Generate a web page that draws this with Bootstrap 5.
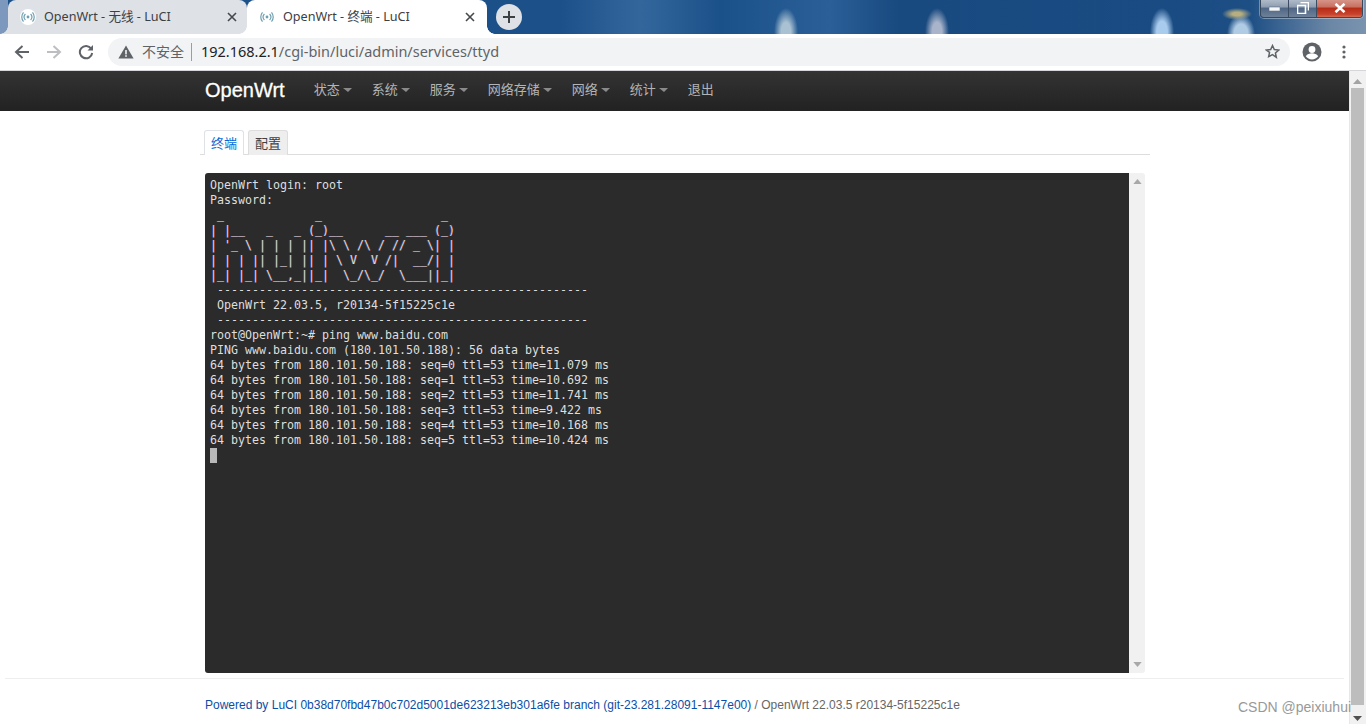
<!DOCTYPE html>
<html lang="zh-CN">
<head>
<meta charset="utf-8">
<title>OpenWrt - 终端 - LuCI</title>
<link href="https://cdn.jsdelivr.net/npm/bootstrap@5.3.0/dist/css/bootstrap.min.css" rel="stylesheet">
<style>
html,body{height:724px;overflow:hidden;margin:0}
body{font-family:"Liberation Sans","Noto Sans CJK SC",sans-serif;background:#fff;color:#404040;position:relative}
.shell{height:724px}
.ui-font{font-family:"Noto Sans","Noto Sans CJK SC",sans-serif}
.tabstrip{height:34px;flex:none;position:relative;padding-left:8px;
 background:
 radial-gradient(ellipse 12px 24px at 786px 32px,#a9c1d2 40%,rgba(169,193,210,0) 100%),
 radial-gradient(ellipse 12px 24px at 937px 32px,#a9b4ca 40%,rgba(169,180,202,0) 100%),
 radial-gradient(ellipse 12px 24px at 1162px 32px,#a8cbee 45%,rgba(168,203,238,0) 100%),
 radial-gradient(ellipse 15px 6px at 1237px 14px,#b7ae80 30%,rgba(183,174,128,0) 100%),
 radial-gradient(ellipse 14px 20px at 1241px 34px,#b0cbe4 50%,rgba(176,203,228,0) 100%),
 linear-gradient(90deg,#7c98bd 0,#7c98bd 8px,#1c5089 8px,#1c5089 560px,#33679c 640px,#1b5189 720px,#2a5f97 830px,#18497f 900px,#1a4c83 1180px,#1d4f85 1250px,#6b87a6 1330px,#7a94af 1366px)}
.ctab{height:34px;width:239px;display:flex;align-items:center;padding:0 8px 0 12px;border-radius:8px 8px 0 0;font-size:12.6px;color:#3c4043;position:relative}
.ctab-off{background:#dee1e6;padding-right:6px}
.ctab-on{background:#fff;width:240px}
.ctab-on::before,.ctab-on::after,.ctab-off::before{content:"";position:absolute;bottom:0;width:8px;height:8px}
.ctab-on::before{left:-8px;background:radial-gradient(circle at 0 0,rgba(255,255,255,0) 7.5px,#fff 8px)}
.ctab-on::after{right:-8px;background:radial-gradient(circle at 100% 0,rgba(255,255,255,0) 7.5px,#fff 8px)}
.ctab-off::before{left:-8px;background:radial-gradient(circle at 0 0,rgba(222,225,230,0) 7.5px,#dee1e6 8px)}
.ctab-title{margin-left:8px;flex:1;white-space:nowrap}
.newtab{width:26px;height:26px;border-radius:50%;background:#dee1e6;margin:4px 0 0 9px;flex:none}
.winbtns{position:absolute;right:3px;top:-1px;height:19px;width:103px;display:flex;border:1px solid #39475a;border-top:0;border-radius:0 0 4px 4px;overflow:hidden;box-shadow:0 0 0 1px rgba(255,255,255,.35)}
.winb{display:flex;align-items:center;justify-content:center;border-right:1px solid #3d4c60;background:linear-gradient(#b4bfcc 0,#8d9db1 45%,#4f6684 50%,#6e8199 100%)}
.winb-min,.winb-max{width:28px}
.winb-close{flex:1;border-right:0;background:linear-gradient(#d9998d 0,#c7705f 45%,#b52b17 50%,#c9432c 85%,#d56a4f 100%)}
.toolbar{height:37px;flex:none;background:#fff;border-bottom:1px solid #d4d6d9;padding:0 0 1px 6px}
.tbtn{width:32px;display:flex;justify-content:center;align-items:center}
.omni{width:1182px;height:28px;margin-left:6px;background:#f1f3f4;border-radius:14px;padding-left:10px;font-size:14px;color:#5f6368;white-space:nowrap}
.omni-sec{margin-left:8px;font-size:14px}
.omni-sep{width:1px;height:18px;background:#9a9da1;margin:0 9px 0 7px}
.omni-url{font-size:14.47px;color:#5f6368}
.omni-url b{font-weight:400;color:#202124}
.omni-star{margin-left:auto;margin-right:10px}
.tool-avatar{margin-left:12px}
.tool-menu{margin-left:20px}
.viewport{flex:1;min-height:0}
.pagearea{flex:1;min-width:0;position:relative}
.vscroll{width:17px;flex:none;background:#f1f1f1;border-left:1px solid #e7e7e7;padding:0 2px 0 1px}
.vthumb{flex:1;background:#bdbdbd;margin:9px 0 11px}
.varrow{height:8px;display:flex;justify-content:center}
.topnav{height:40px;flex:none;padding:0 0 0 205px;background:linear-gradient(#333,#222);font-size:13px;flex-wrap:nowrap;justify-content:flex-start}
.topnav .navbar-brand{font-size:20px;color:#fff;padding:0;margin:0 19px 3px 0;line-height:38px;-webkit-text-stroke:.3px #fff}
.topnav .navlist{flex-direction:row;margin-bottom:2px}
.topnav .nav-link{color:#b4b4b4;padding:0 10px;line-height:38px;display:block}
.topnav .dropdown-toggle::after{margin-left:3px;vertical-align:2px;border-top:4px solid #8a8a8a;border-left:5px solid transparent;border-right:4px solid transparent;border-bottom:0}
.body-wrap{width:950px;margin-left:200px}
.subtabs{margin-top:19px;padding-left:4px;height:25px;border-bottom:1px solid #ddd;gap:4px;font-size:13px}
.subtabs .nav-link{height:25px;width:40px;padding:4px 0 0;text-align:center;line-height:18px;border:1px solid #ddd;border-bottom:0;border-radius:3px 3px 0 0;color:#404040;background:#eee;margin:0}
.subtabs .nav-link.active{color:#0069d6;background:#fff;height:25px;position:relative;z-index:1}
.termbox{width:940px;height:500px;margin:18px 0 0 5px;border-radius:3px;overflow:hidden;background:#f1f1f1}
.termtext{flex:1;background:#2b2b2b;padding:5px;margin:0;color:#dedede;font:11.63px/15px "DejaVu Sans Mono","Liberation Mono",monospace;overflow:hidden}
.bannerart{text-shadow:.6px 0 rgba(200,50,50,.55),-.6px 0 rgba(70,110,220,.55)}
.cursorblk{display:block;width:7px;height:15px;background:#b8b8b8}
.termbar{width:16px;flex:none;padding:6px 0 6px}
.foot{margin:5px 5px 0;border-top:1px solid #eee;padding:19px 0 0 200px;font-size:12px;line-height:14px;color:#666;white-space:nowrap;width:1339px}
.foot a{color:#0a4fa6;text-decoration:none}
.wmark{position:absolute;left:1238px;top:699px;font-size:14px;line-height:16px;color:#999;z-index:2;white-space:nowrap}
</style>
</head>
<body>
<div class="shell d-flex flex-column">
  <div class="tabstrip d-flex align-items-start ui-font">
    <div class="ctab ctab-off">
      <svg width="16" height="16" viewBox="0 0 16 16"><circle cx="8" cy="8" r="8" fill="#fff"/><circle cx="8" cy="8" r="1.4" fill="#6f9fb0"/><path d="M5.4 5a4.4 4.4 0 0 0 0 6M10.6 5a4.4 4.4 0 0 1 0 6M3.5 3.4a7 7 0 0 0 0 9.2M12.5 3.4a7 7 0 0 1 0 9.2" fill="none" stroke="#6f9fb0" stroke-width="1.2"/></svg>
      <span class="ctab-title">OpenWrt - 无线 - LuCI</span>
      <svg width="10" height="10" viewBox="0 0 10 10" class="me-1"><path d="M1 1l8 8M9 1l-8 8" stroke="#45484c" stroke-width="1.6"/></svg>
    </div>
    <div class="ctab ctab-on">
      <svg width="16" height="16" viewBox="0 0 16 16"><circle cx="8" cy="8" r="1.4" fill="#6f9fb0"/><path d="M5.4 5a4.4 4.4 0 0 0 0 6M10.6 5a4.4 4.4 0 0 1 0 6M3.5 3.4a7 7 0 0 0 0 9.2M12.5 3.4a7 7 0 0 1 0 9.2" fill="none" stroke="#6f9fb0" stroke-width="1.2"/></svg>
      <span class="ctab-title">OpenWrt - 终端 - LuCI</span>
      <svg width="10" height="10" viewBox="0 0 10 10" class="me-1"><path d="M1 1l8 8M9 1l-8 8" stroke="#45484c" stroke-width="1.6"/></svg>
    </div>
    <div class="newtab d-flex align-items-center justify-content-center">
      <svg width="14" height="14" viewBox="0 0 14 14"><path d="M7 1v12M1 7h12" stroke="#3c4043" stroke-width="2"/></svg>
    </div>
    <div class="winbtns">
      <div class="winb winb-min"><svg width="11" height="5" viewBox="0 0 11 5"><rect width="11" height="4" y="1" fill="#f4f6f8" stroke="#4a5a70" stroke-width=".5"/></svg></div>
      <div class="winb winb-max"><svg width="12" height="12" viewBox="0 0 12 12"><path d="M3.5 .5h8v8M.5 3.5h8v8h-8z" fill="none" stroke="#fff" stroke-width="1.6"/></svg></div>
      <div class="winb winb-close"><svg width="12" height="10" viewBox="0 0 12 10"><path d="M1.5 .8l9 8.4M10.5 .8l-9 8.4" stroke="#fff" stroke-width="2.6"/></svg></div>
    </div>
  </div>
  <div class="toolbar d-flex align-items-center ui-font">
    <div class="tbtn"><svg width="16" height="16" viewBox="0 0 16 16"><path d="M15 8H2.5M8.5 2L2 8l6.5 6" fill="none" stroke="#5f6368" stroke-width="2"/></svg></div>
    <div class="tbtn"><svg width="16" height="16" viewBox="0 0 16 16"><path d="M1 8h12.5M7.5 2L14 8l-6.5 6" fill="none" stroke="#bcbec1" stroke-width="2"/></svg></div>
    <div class="tbtn"><svg width="16" height="16" viewBox="0 0 16 16"><path d="M13.2 4.6A6.2 6.2 0 1 0 14.2 9" fill="none" stroke="#5f6368" stroke-width="2"/><path d="M15 1v5.5H9.5z" fill="#5f6368"/></svg></div>
    <div class="omni d-flex align-items-center">
      <svg width="16" height="14" viewBox="0 0 16 14"><path d="M8 .5L15.6 13.6H.4z" fill="#5f6368"/><rect x="7.2" y="5" width="1.6" height="4.4" fill="#f1f3f4"/><rect x="7.2" y="10.2" width="1.6" height="1.6" fill="#f1f3f4"/></svg>
      <span class="omni-sec">不安全</span><span class="omni-sep"></span>
      <span class="omni-url"><b>192.168.2.1</b>/cgi-bin/luci/admin/services/ttyd</span>
      <svg class="omni-star" width="15" height="15" viewBox="0 0 24 24"><path d="M12 2.5l2.9 6.4 7 .8-5.2 4.7 1.4 6.9L12 17l-6.1 3.3 1.4-6.9L2.1 9.700l7-.8z" fill="none" stroke="#5f6368" stroke-width="2.4"/></svg>
    </div>
    <svg class="tool-avatar" width="20" height="20" viewBox="0 0 20 20"><circle cx="10" cy="10" r="9.500" fill="#5f6368"/><circle cx="10" cy="7.500" r="3.400" fill="#fff"/><path d="M3.800 14.200c1.400-2.200 3.800-3 6.200-3s4.800.8 6.200 3c-1.400 2-3.700 3.200-6.200 3.200s-4.800-1.200-6.200-3.200z" fill="#fff"/></svg>
    <svg class="tool-menu" width="4" height="14" viewBox="0 0 4 14"><circle cx="2" cy="2" r="1.600" fill="#5f6368"/><circle cx="2" cy="7" r="1.600" fill="#5f6368"/><circle cx="2" cy="12" r="1.600" fill="#5f6368"/></svg>
  </div>
  <div class="viewport d-flex">
    <div class="pagearea d-flex flex-column">
      <nav class="navbar topnav">
        <a class="navbar-brand" href="#">OpenWrt</a>
        <ul class="nav navlist">
          <li class="nav-item"><a class="nav-link dropdown-toggle" href="#">状态</a></li>
          <li class="nav-item"><a class="nav-link dropdown-toggle" href="#">系统</a></li>
          <li class="nav-item"><a class="nav-link dropdown-toggle" href="#">服务</a></li>
          <li class="nav-item"><a class="nav-link dropdown-toggle" href="#">网络存储</a></li>
          <li class="nav-item"><a class="nav-link dropdown-toggle" href="#">网络</a></li>
          <li class="nav-item"><a class="nav-link dropdown-toggle" href="#">统计</a></li>
          <li class="nav-item"><a class="nav-link" href="#">退出</a></li>
        </ul>
      </nav>
      <div class="body-wrap">
        <ul class="nav nav-tabs subtabs">
          <li class="nav-item"><a class="nav-link active" href="#">终端</a></li>
          <li class="nav-item"><a class="nav-link" href="#">配置</a></li>
        </ul>
        <div class="termbox d-flex">
<pre class="termtext">OpenWrt login: root
Password:
<span class="bannerart"> _             _                 _
| |__   _   _ (_)__      __ ___ (_)
| '_ \ | | | || |\ \ /\ / // _ \| |
| | | || |_| || | \ V  V /|  __/| |
|_| |_| \__,_||_|  \_/\_/  \___||_|</span>
 -----------------------------------------------------
 OpenWrt 22.03.5, r20134-5f15225c1e
 -----------------------------------------------------
root@OpenWrt:~# ping www.baidu.com
PING www.baidu.com (180.101.50.188): 56 data bytes
64 bytes from 180.101.50.188: seq=0 ttl=53 time=11.079 ms
64 bytes from 180.101.50.188: seq=1 ttl=53 time=10.692 ms
64 bytes from 180.101.50.188: seq=2 ttl=53 time=11.741 ms
64 bytes from 180.101.50.188: seq=3 ttl=53 time=9.422 ms
64 bytes from 180.101.50.188: seq=4 ttl=53 time=10.168 ms
64 bytes from 180.101.50.188: seq=5 ttl=53 time=10.424 ms
<span class="cursorblk"></span></pre>
          <div class="termbar d-flex flex-column justify-content-between align-items-center">
            <svg width="9" height="5" viewBox="0 0 10 6"><path d="M5 0l5 6H0z" fill="#a8a8a8"/></svg>
            <svg width="9" height="5" viewBox="0 0 10 6"><path d="M5 6L0 0h10z" fill="#a8a8a8"/></svg>
          </div>
        </div>
      </div>
      <footer class="foot"><a href="#">Powered by LuCI 0b38d70fbd47b0c702d5001de623213eb301a6fe branch (git-23.281.28091-1147e00)</a> / OpenWrt 22.03.5 r20134-5f15225c1e</footer>
    </div>
    <div class="vscroll d-flex flex-column">
      <div class="varrow pt-2"><svg width="9" height="5" viewBox="0 0 9 5"><path d="M4.500 0L9 5H0z" fill="#a3a3a3"/></svg></div>
      <div class="vthumb"></div>
      <div class="varrow"><svg width="9" height="5" viewBox="0 0 9 5"><path d="M4.500 5L0 0h9z" fill="#505050"/></svg></div>
    </div>
  </div>
</div>
<div class="wmark">CSDN @peixiuhui</div>
</body>
</html>
